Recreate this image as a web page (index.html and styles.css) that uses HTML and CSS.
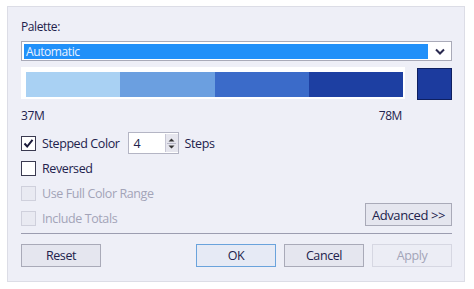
FILE: index.html
```html
<!DOCTYPE html>
<html lang="en">
<head>
    <meta charset="UTF-8">
    <title>Palette</title>
    <link rel="stylesheet" href="styles.css">
</head>
<body>
<div class="dialog">
    <div class="label">Palette:</div>
    <div class="select">
        <span class="select-value">Automatic</span>
        <svg class="chevron" width="10" height="7" viewBox="0 0 10 7"><path d="M1 1.5 L5 5.5 L9 1.5" fill="none" stroke="#2a2a50" stroke-width="2"/></svg>
    </div>

    <div class="ramp-row">
        <div class="ramp">
            <div class="step" style="background:#a9d1f3"></div>
            <div class="step" style="background:#6b9fe0"></div>
            <div class="step" style="background:#3b6bc9"></div>
            <div class="step" style="background:#1d3fa2"></div>
        </div>
        <div class="swatch"></div>
    </div>
    <div class="range">
        <span>37M</span>
        <span>78M</span>
    </div>

    <div class="options">
        <div class="option">
            <span class="box checked"><svg width="11" height="11" viewBox="0 0 11 11"><path d="M1.5 5.5 L4.2 8.5 L9.5 1.8" fill="none" stroke="#1a1a3a" stroke-width="2"/></svg></span>
            <span>Stepped Color</span>
            <span class="spin">
                <span class="spin-value">4</span>
                <span class="spin-arrows">
                    <svg width="9" height="15" viewBox="0 0 9 15"><path d="M1.5 5.5 L4.5 2.5 L7.5 5.5 Z M1.5 9.5 L4.5 12.5 L7.5 9.5 Z" fill="#333"/><path d="M0 7.5 H9" stroke="#b8b8c8" stroke-width="1"/></svg>
                </span>
            </span>
            <span>Steps</span>
        </div>
        <div class="option">
            <span class="box"></span>
            <span>Reversed</span>
        </div>
        <div class="option disabled">
            <span class="box"></span>
            <span>Use Full Color Range</span>
        </div>
        <div class="option disabled">
            <span class="box"></span>
            <span>Include Totals</span>
            <button class="btn advanced">Advanced &gt;&gt;</button>
        </div>
    </div>

    <div class="footer">
        <button class="btn">Reset</button>
        <div class="footer-right">
            <button class="btn primary">OK</button>
            <button class="btn">Cancel</button>
            <button class="btn" disabled>Apply</button>
        </div>
    </div>
</div>
</body>
</html>
```

FILE: styles.css
```css
body {
    margin: 0;
    padding: 6px 9px 7px 7px;
    background-color: #ffffff;
    font-family: "Open Sans", "DejaVu Sans", sans-serif;
    font-size: 12px;
    font-weight: 500;
    color: #22224c;
}

.dialog {
    height: 276px;
    box-sizing: border-box;
    padding: 11px 12px 0 13px;
    background-color: #eeeff7;
    border: 1px solid #dcdde6;
    letter-spacing: -0.4px;
}

.label {
    height: 18px;
    line-height: 18px;
    margin-bottom: 5px;
}

.select {
    display: flex;
    align-items: center;
    height: 20px;
    box-sizing: border-box;
    padding: 2px;
    background-color: #ffffff;
    border: 1px solid #a9aab8;
}
.select-value {
    flex: 1;
    height: 15px;
    line-height: 15px;
    padding-left: 2px;
    background-color: #2190f9;
    color: #eaf2ff;
    font-weight: 400;
}
.chevron {
    margin: 0 4px 0 7px;
}

.ramp-row {
    display: flex;
    align-items: flex-end;
    gap: 12px;
    margin-top: 6px;
}
.ramp {
    display: flex;
    width: 377px;
    height: 25px;
    padding: 5px 2px 2px 5px;
    background-color: #ffffff;
}
.step {
    flex: 1;
}
.swatch {
    width: 33px;
    height: 30px;
    margin-bottom: -1px;
    background-color: #1c3b9e;
    border: 1px solid #0e1f60;
}

.range {
    display: flex;
    justify-content: space-between;
    width: 381px;
    height: 18px;
    line-height: 18px;
    margin-top: 8px;
}

.options {
    display: flex;
    flex-direction: column;
    gap: 5px;
    margin-top: 8px;
    padding-bottom: 5px;
    border-bottom: 1px solid #9c9db0;
}
.option {
    display: flex;
    align-items: center;
    gap: 6px;
    height: 20px;
    font-size: 12.5px;
}
.box {
    display: flex;
    align-items: center;
    justify-content: center;
    width: 13px;
    height: 13px;
    background-color: #ffffff;
    border: 1px solid #3a3a50;
}
.disabled {
    color: #a3a4b8;
}
.disabled .box {
    background-color: #e9eaf2;
    border-color: #cfd0dc;
}

.spin {
    display: flex;
    align-items: center;
    width: 49px;
    height: 20px;
    margin-left: 2px;
    background-color: #ffffff;
    border: 1px solid #b4b5c4;
}
.spin-value {
    flex: 1;
    padding-left: 5px;
}
.spin-arrows {
    display: flex;
    width: 12px;
    height: 18px;
    align-items: center;
    justify-content: center;
    background-color: #e6e6ee;
    border-left: 1px solid #c8c8d6;
}

.btn {
    width: 80px;
    height: 23px;
    padding: 0;
    font-family: inherit;
    font-size: 12.5px;
    font-weight: 500;
    letter-spacing: -0.4px;
    color: #22224c;
    background-color: #e5e6ef;
    border: 1px solid #a9aab8;
}
.btn.primary {
    border: 1px solid #6aa3dc;
    background-color: #e6eaf5;
}
.btn:disabled {
    color: #a3a4b8;
    background-color: #ecedf5;
    border-color: #d6d7e2;
}
.advanced {
    align-self: flex-start;
    width: 87px;
    height: 23px;
    margin: -5px 0 0 auto;
    font-size: 13px;
}

.footer {
    display: flex;
    justify-content: space-between;
    padding-top: 10px;
}
.footer-right {
    display: flex;
    gap: 8px;
}
```
